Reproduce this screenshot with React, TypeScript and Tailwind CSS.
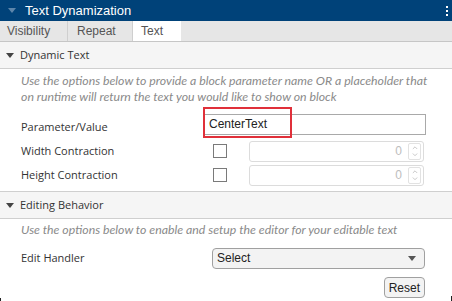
import { ChevronUp, ChevronDown } from "lucide-react";

const Caret = ({ className = "" }: { className?: string }) => (
  <svg width="8" height="5" viewBox="0 0 8 5" className={className}>
    <path d="M0 0 L8 0 L4 5 Z" fill="currentColor" />
  </svg>
);

const SectionHeader = ({ title }: { title: string }) => (
  <div className="flex h-[27px] items-center gap-[6px] border-b border-[#cfcfcf] bg-[#f5f5f5] pl-[6px] font-['Open_Sans',sans-serif] text-[11px] text-[#333]">
    <Caret className="text-[#444]" />
    <span>{title}</span>
  </div>
);

const NumberField = () => (
  <div className="flex h-[21px] w-[175px] items-center justify-end rounded-[3px] border border-[#dcdcdc] bg-white pr-[2px]">
    <span className="mr-[6px] font-['Liberation_Sans',sans-serif] text-[12px] text-[#bdbdbd]">0</span>
    <div className="flex h-[17px] w-[13px] flex-col items-center justify-center rounded-[2px] border border-[#e2e2e2] text-[#c4c4c4]">
      <ChevronUp className="h-[8px] w-[8px]" strokeWidth={3} />
      <ChevronDown className="h-[8px] w-[8px]" strokeWidth={3} />
    </div>
  </div>
);

const Row = ({ label, children }: { label: string; children: React.ReactNode }) => (
  <div className="flex h-[24px] items-center">
    <span className="w-[204px] pl-[21px] font-['Open_Sans',sans-serif] text-[11px] text-[#333]">{label}</span>
    {children}
  </div>
);

export default function App() {
  return (
    <div className="relative h-[301px] w-[452px] overflow-hidden bg-white">
      {/* title bar */}
      <div className="flex h-[21px] items-center bg-[#004279] pl-[8px] pr-[4px]">
        <Caret className="text-[#5d86ab]" />
        <span className="ml-[9px] font-['Liberation_Sans',sans-serif] text-[13px] text-white">Text Dynamization</span>
        <div className="ml-auto flex flex-col gap-[2px]">
          <span className="h-[2px] w-[2px] bg-white" />
          <span className="h-[2px] w-[2px] bg-white" />
          <span className="h-[2px] w-[2px] bg-white" />
        </div>
      </div>

      {/* tabs */}
      <div className="flex h-[21px] border-b border-[#c6c6c6] bg-[#e6e6e6] font-['Liberation_Sans',sans-serif] text-[12px] text-[#555]">
        <div className="flex w-[68px] items-center border-r border-[#cfcfcf] pl-[7px]">Visibility</div>
        <div className="flex w-[65px] items-center border-r border-[#cfcfcf] pl-[9px]">Repeat</div>
        <div className="flex w-[48px] items-center bg-white pl-[8px]">Text</div>
      </div>

      <SectionHeader title="Dynamic Text" />
      <p className="px-[21px] pt-[4px] font-['Lato',sans-serif] text-[12.3px] italic leading-[16px] text-[#8a8a8a]">
        Use the options below to provide a block parameter name OR a placeholder that on runtime will return the text
        you would like to show on block
      </p>

      <div className="mt-[10px] flex flex-col">
        <Row label="Parameter/Value">
          <div className="relative mb-[6px]">
            <div className="flex h-[21px] w-[222px] items-center border border-[#a9a9a9] bg-white pl-[4px] font-['Liberation_Sans',sans-serif] text-[12px] text-[#222]">
              CenterText
            </div>
            <div className="absolute left-[-1px] top-[-7px] h-[31px] w-[89px] border-2 border-[#e0303a]" />
          </div>
        </Row>
        <Row label="Width Contraction">
          <div className="ml-[9px] mr-[22px] h-[14px] w-[14px] border border-[#7a7a7a] bg-white" />
          <NumberField />
        </Row>
        <Row label="Height Contraction">
          <div className="ml-[9px] mr-[22px] h-[14px] w-[14px] border border-[#7a7a7a] bg-white" />
          <NumberField />
        </Row>
      </div>

      <div className="mt-[4px] border-t border-[#cfcfcf]">
        <SectionHeader title="Editing Behavior" />
      </div>
      <p className="px-[21px] pt-[3px] font-['Lato',sans-serif] text-[12.3px] italic leading-[16px] text-[#8a8a8a]">
        Use the options below to enable and setup the editor for your editable text
      </p>

      <div className="mt-[9px] flex h-[22px] items-center">
        <span className="w-[212px] pl-[21px] font-['Open_Sans',sans-serif] text-[11px] text-[#333]">Edit Handler</span>
        <div className="flex h-[21px] w-[213px] items-center rounded-[4px] border border-[#a0a0a0] bg-[#f3f3f3] pl-[4px] pr-[8px] font-['Liberation_Sans',sans-serif] text-[12px] text-[#222]">
          <span>Select</span>
          <Caret className="ml-auto text-[#555]" />
        </div>
      </div>

      <div className="mt-[8px] flex justify-end pr-[27px]">
        <button className="h-[21px] rounded-[4px] border border-[#a0a0a0] bg-[#f3f3f3] px-[4px] font-['Liberation_Sans',sans-serif] text-[12px] text-[#222]">
          Reset
        </button>
      </div>

      <div className="absolute bottom-0 left-0 h-[3px] w-[1px] bg-[#222]" />
      <div className="absolute bottom-0 right-0 h-[5px] w-[1px] bg-[#222]" />
    </div>
  );
}
